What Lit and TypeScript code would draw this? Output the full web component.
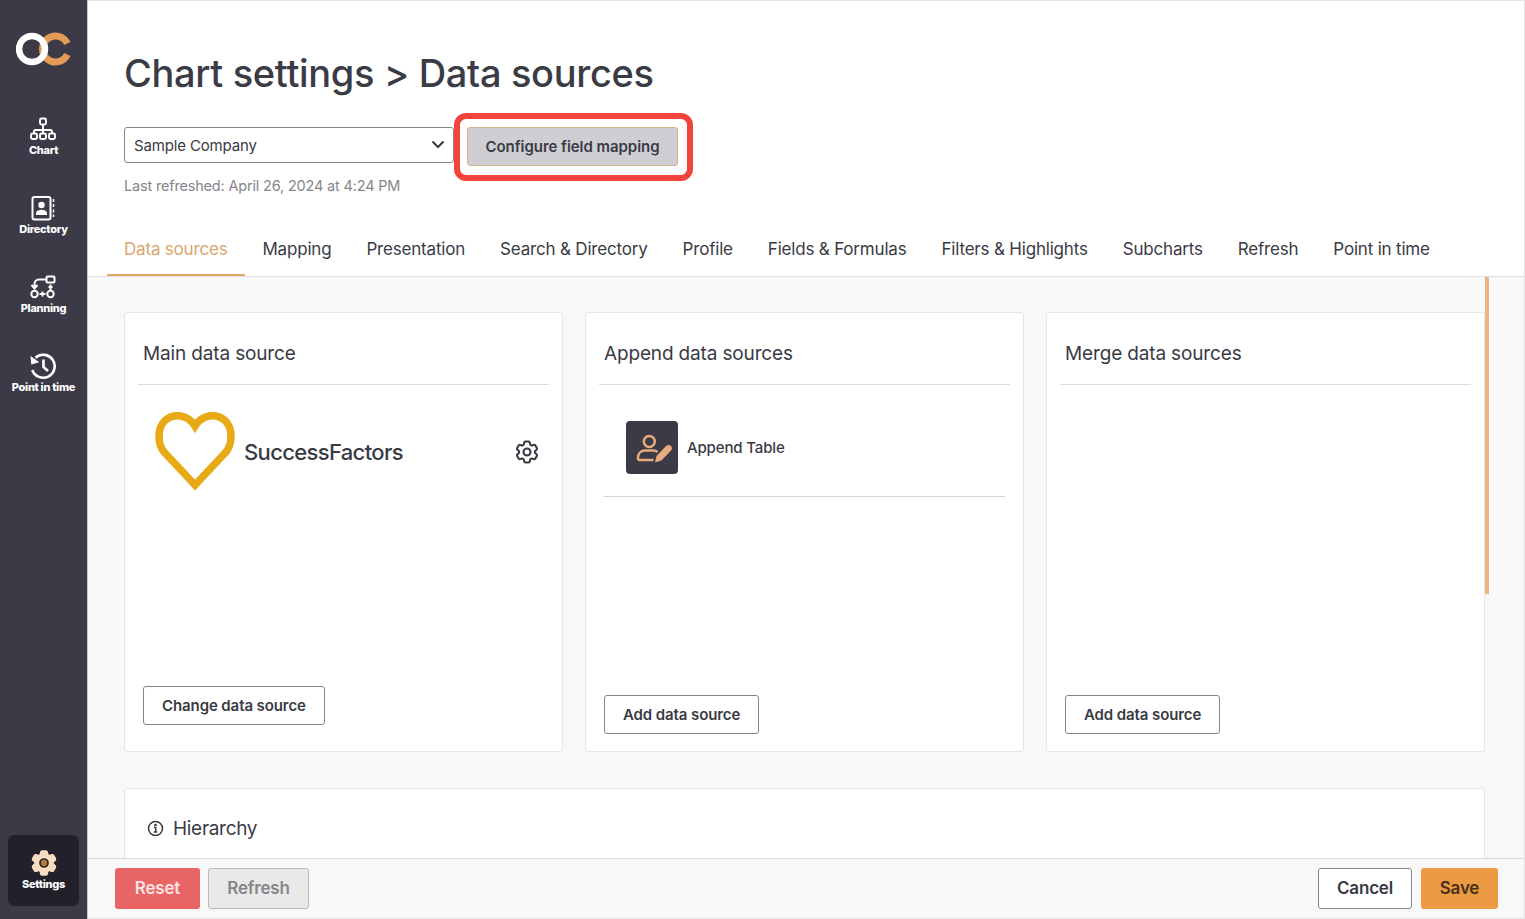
import { LitElement, html, css, svg } from 'lit';
import { customElement } from 'lit/decorators.js';

const navItems = [
  {
    label: 'Chart',
    icon: svg`<g fill="none" stroke="currentColor" stroke-width="1.900" stroke-linejoin="round">
      <rect x="11" y="2.500" width="6" height="6" rx="1.500"/>
      <rect x="2" y="17.500" width="6" height="5.500" rx="1.500"/>
      <rect x="11" y="17.500" width="6" height="5.500" rx="1.500"/>
      <rect x="20" y="17.500" width="6" height="5.500" rx="1.500"/>
      <path d="M14 8.500v9M5 17.500V15.500A1.500 1.500 0 0 1 6.500 14h15a1.500 1.500 0 0 1 1.500 1.500v2"/>
    </g>`,
  },
  {
    label: 'Directory',
    icon: svg`<g fill="none" stroke="currentColor" stroke-width="2">
      <rect x="3.500" y="2" width="18" height="22.500" rx="2"/>
      <path d="M24.500 4v3M24.500 9v3M24.500 14.500v3M24.500 19.500v2.500" stroke-width="1.500"/>
      <circle cx="12.500" cy="10" r="3.200" fill="currentColor" stroke="none"/>
      <path d="M7 20v-1.500c0-2.500 2.200-3.700 5.500-3.700s5.500 1.200 5.500 3.700V20z" fill="currentColor" stroke="none"/>
    </g>`,
  },
  {
    label: 'Planning',
    icon: svg`<g fill="none" stroke="currentColor" stroke-width="2">
      <rect x="17.500" y="2.500" width="8" height="6" rx="1"/>
      <circle cx="5.500" cy="20" r="3.200"/>
      <circle cx="21.500" cy="20" r="3.200"/>
      <path d="M17.500 5.500H10a4.500 4.500 0 0 0-4.500 4.500v4M2.500 11l3 3.500 3-3.500"/>
      <path d="M10.500 20h6M13.500 17.500v5M21.500 16.500v-6M19.500 13h4"/>
    </g>`,
  },
  {
    label: 'Point in time',
    icon: svg`<g fill="none" stroke="currentColor" stroke-width="2.600">
      <path d="M6.500 4.700A11.500 11.500 0 1 1 3.300 17"/>
      <path d="M1.500 3l.8 8.500 8-2.300z" fill="currentColor" stroke="none"/>
      <path d="M14.500 6.500V14l4.500 4"/>
    </g>`,
  },
];

const tabs = [
  'Data sources',
  'Mapping',
  'Presentation',
  'Search & Directory',
  'Profile',
  'Fields & Formulas',
  'Filters & Highlights',
  'Subcharts',
  'Refresh',
  'Point in time',
];

// cog outline, shared by the sidebar and the data source card
const gearPath =
  'M9.594 3.940c.09-.542.56-.94 1.110-.94h2.593c.55 0 1.020.398 1.110.94l.213 1.281c.063.374.313.686.645.870.074.040.147.083.22.127.325.196.72.257 1.075.124l1.217-.456a1.125 1.125 0 0 1 1.370.49l1.296 2.247a1.125 1.125 0 0 1-.26 1.431l-1.003.827c-.293.241-.438.613-.43.992a7.723 7.723 0 0 1 0 .255c-.008.378.137.75.43.991l1.004.827c.424.35.534.955.26 1.430l-1.298 2.247a1.125 1.125 0 0 1-1.369.491l-1.217-.456c-.355-.133-.75-.072-1.076.124a6.470 6.470 0 0 1-.22.128c-.331.183-.581.495-.644.869l-.213 1.281c-.09.543-.56.94-1.110.94h-2.594c-.55 0-1.019-.398-1.110-.94l-.213-1.281c-.062-.374-.312-.686-.644-.87a6.520 6.520 0 0 1-.22-.127c-.325-.196-.72-.257-1.076-.124l-1.217.456a1.125 1.125 0 0 1-1.369-.49l-1.297-2.247a1.125 1.125 0 0 1 .26-1.431l1.004-.827c.292-.24.437-.613.43-.991a6.932 6.932 0 0 1 0-.255c.007-.38-.138-.751-.43-.992l-1.004-.827a1.125 1.125 0 0 1-.26-1.430l1.297-2.247a1.125 1.125 0 0 1 1.370-.491l1.216.456c.356.133.751.072 1.076-.124.072-.044.146-.086.22-.128.332-.183.582-.495.644-.869l.214-1.280z';

@customElement('app-root')
export class AppRoot extends LitElement {
  static styles = css`
    :host {
      display: flex;
      width: 1525px;
      height: 919px;
      overflow: hidden;
      font-family: Inter, 'Liberation Sans', sans-serif;
      color: #3a3a44;
      background: #fff;
    }
    .sidebar {
      width: 87px;
      flex: none;
      background: #3b3a46;
      color: #fff;
      display: flex;
      flex-direction: column;
      align-items: center;
      border-right: 1px solid #c9c9cc;
    }
    .logo {
      margin: 30px 0 0 1px;
      height: 36px;
    }
    .nav {
      margin-top: 50px;
      display: flex;
      flex-direction: column;
      gap: 27px;
      align-items: center;
    }
    .nav-item {
      display: flex;
      flex-direction: column;
      align-items: center;
      height: 52px;
      font-size: 11px;
      font-weight: 800;
      letter-spacing: -0.3px;
      white-space: nowrap;
    }
    .nav-item svg {
      width: 28px;
      height: 28px;
      margin-bottom: -1px;
    }
    .settings {
      margin-top: auto;
      margin-bottom: 13px;
      width: 71px;
      height: 71px;
      background: #22212a;
      border-radius: 6px;
      display: flex;
      flex-direction: column;
      align-items: center;
      font-size: 11px;
      font-weight: 800;
      letter-spacing: -0.3px;
      padding-top: 12px;
      box-sizing: border-box;
    }
    .settings svg {
      width: 32px;
      height: 32px;
      margin-bottom: -2px;
    }
    .main {
      flex: 1;
      min-width: 0;
      display: flex;
      flex-direction: column;
      position: relative;
      border-top: 1px solid #e4e4e6;
      border-right: 1px solid #e4e4e6;
    }
    .header {
      padding: 49px 0 0 36px;
      flex: none;
    }
    h1 {
      margin: 0;
      font-size: 38px;
      line-height: 46px;
      font-weight: 500;
      letter-spacing: -0.33px;
      color: #3a3b45;
    }
    .controls {
      display: flex;
      align-items: flex-start;
      gap: 13px;
      margin-top: 31px;
      height: 40px;
    }
    .select {
      width: 330px;
      height: 36px;
      box-sizing: border-box;
      border: 1px solid #85858c;
      border-radius: 3px;
      padding: 0 9px;
      display: flex;
      align-items: center;
      justify-content: space-between;
      font-size: 15px;
      letter-spacing: -0.15px;
      color: #3a3a44;
    }
    .select svg {
      width: 14px;
      height: 9px;
      margin-right: -1px;
      margin-top: -2px;
    }
    .configure {
      position: relative;
      width: 211px;
      height: 39px;
      box-sizing: border-box;
      border: 1px solid #d3b48f;
      border-radius: 3px;
      background: #cfcfd3;
      font: inherit;
      font-size: 15px;
      font-weight: 600;
      letter-spacing: -0.05px;
      color: #3a3a44;
      padding: 0;
    }
    .highlight {
      position: absolute;
      left: -14px;
      top: -15px;
      width: 239px;
      height: 68px;
      box-sizing: border-box;
      border: 6px solid #f2443c;
      border-radius: 12px;
    }
    .refreshed {
      margin-top: 10px;
      font-size: 14.500px;
      line-height: 18px;
      letter-spacing: -0.18px;
      color: #85858a;
    }
    .tabs {
      display: flex;
      margin: 29px 0 0 -17.500px;
      height: 52px;
    }
    .tab {
      padding: 0 17.500px;
      font-size: 17px;
      line-height: 51px;
      height: 52px;
      box-sizing: border-box;
      letter-spacing: -0.19px;
      white-space: nowrap;
      color: #3a3a44;
    }
    .tab.active {
      color: #dba670;
      border-bottom: 2px solid #e2a66b;
    }
    .content {
      flex: 1;
      min-height: 0;
      overflow: hidden;
      background: #f8f8f8;
      border-top: 1px solid #dedee0;
      padding: 35px 39px 0 36px;
      position: relative;
    }
    .thumb {
      position: absolute;
      right: 35px;
      top: 0;
      width: 4px;
      height: 317px;
      background: #e6b77f;
    }
    .cards {
      display: grid;
      grid-template-columns: repeat(3, 439px);
      gap: 22px;
    }
    .card {
      height: 440px;
      box-sizing: border-box;
      background: #fff;
      border: 1px solid #e6e6e8;
      border-radius: 3px;
      padding: 0 13px;
      display: flex;
      flex-direction: column;
    }
    .card h2 {
      margin: 0;
      padding: 0 5px;
      height: 72px;
      box-sizing: border-box;
      border-bottom: 1px solid #dcdcde;
      font-size: 19px;
      line-height: 82px;
      font-weight: 400;
      letter-spacing: -0.15px;
    }
    .card-body {
      flex: 1;
    }
    .sf {
      display: flex;
      align-items: center;
      padding: 27px 0 0 17px;
      position: relative;
    }
    .sf .heart {
      width: 80px;
      height: 80px;
      flex: none;
    }
    .sf span {
      margin-left: 9px;
      font-size: 22px;
      font-weight: 500;
      letter-spacing: -0.65px;
    }
    .sf .gear {
      position: absolute;
      right: 8px;
      top: 53px;
      width: 28px;
      height: 28px;
    }
    .append {
      margin: 0 5px;
      height: 112px;
      box-sizing: border-box;
      border-bottom: 1px solid #d5d5d8;
      display: flex;
      align-items: center;
      padding: 14px 0 0 22px;
      gap: 9px;
      font-size: 15px;
      font-weight: 500;
      letter-spacing: -0.15px;
    }
    .append .tile {
      width: 52px;
      height: 53px;
      border-radius: 4px;
      background: #3b3a46;
      display: flex;
      align-items: center;
      justify-content: center;
    }
    .card-foot {
      padding: 0 5px 17px;
    }
    .card-foot.main-foot {
      padding-bottom: 26px;
    }
    .btn {
      height: 39px;
      box-sizing: border-box;
      border: 1px solid #85858c;
      border-radius: 3px;
      background: #fff;
      font: inherit;
      font-size: 15px;
      font-weight: 600;
      letter-spacing: -0.1px;
      color: #3a3a44;
      padding: 0 18px;
    }
    .hierarchy {
      margin-top: 36px;
      height: 120px;
      box-sizing: border-box;
      background: #fff;
      border: 1px solid #e6e6e8;
      border-radius: 3px;
      padding: 26px 0 0 22px;
      display: flex;
      align-items: flex-start;
      gap: 9px;
      font-size: 19px;
      line-height: 28px;
      letter-spacing: -0.3px;
    }
    .hierarchy svg {
      width: 17px;
      height: 17px;
      margin-top: 5px;
    }
    .footer {
      flex: none;
      height: 61px;
      box-sizing: border-box;
      background: #f8f8f8;
      border-top: 1px solid #d9d9db;
      border-bottom: 1px solid #e4e4e6;
      padding: 9px 26px 0 27px;
      display: flex;
      gap: 8px;
    }
    .footer button {
      height: 41px;
      box-sizing: border-box;
      border-radius: 3px;
      font: inherit;
      font-size: 17px;
      font-weight: 600;
      letter-spacing: -0.2px;
      padding: 0 0 2px;
    }
    .reset {
      width: 85px;
      border: none;
      background: #e96565;
      color: #fbe4e4;
    }
    .refresh {
      width: 101px;
      border: 1px solid #b8b8bb;
      background: #e9e9ea;
      color: #85858a;
    }
    .footer .cancel {
      width: 94px;
      margin-left: auto;
      border: 1px solid #85858c;
      background: #fff;
      color: #3a3a44;
    }
    .save {
      width: 77px;
      margin-left: 1px;
      border: none;
      background: #ec9b44;
      color: #4a2f16;
    }
  `;

  render() {
    return html`
      <aside class="sidebar">
        <svg class="logo" viewBox="0 0 56 36" width="56">
          <path d="M51.300 13.500A13 13 0 1 0 51.300 24.500" fill="none" stroke="#e39b56" stroke-width="7"/>
          <circle cx="16" cy="19" r="13" fill="none" stroke="#fff" stroke-width="6.500"/>
        </svg>
        <nav class="nav">
          ${navItems.map(
            (item) => html`
              <div class="nav-item">
                <svg viewBox="0 0 28 28">${item.icon}</svg>
                ${item.label}
              </div>
            `
          )}
        </nav>
        <div class="settings">
          <svg viewBox="0 0 24 24">
            <path d=${gearPath} fill="#f6dcc0" stroke="#f6dcc0" stroke-width="1.200"/>
            <circle cx="12" cy="12" r="3" fill="#b5793a" stroke="#2a2420" stroke-width="1.300"/>
          </svg>
          Settings
        </div>
      </aside>

      <div class="main">
        <header class="header">
          <h1>Chart settings &gt; Data sources</h1>
          <div class="controls">
            <div class="select">
              Sample Company
              <svg viewBox="0 0 14 9"><path d="M1.500 1.500 7 7l5.500-5.500" fill="none" stroke="#3a3a44" stroke-width="2"/></svg>
            </div>
            <button class="configure">
              Configure field mapping
              <span class="highlight"></span>
            </button>
          </div>
          <div class="refreshed">Last refreshed: April 26, 2024 at 4:24 PM</div>
          <div class="tabs">
            ${tabs.map(
              (t, i) => html`<div class="tab ${i === 0 ? 'active' : ''}">${t}</div>`
            )}
          </div>
        </header>

        <section class="content">
          <div class="thumb"></div>
          <div class="cards">
            <div class="card">
              <h2>Main data source</h2>
              <div class="card-body">
                <div class="sf">
                  <svg class="heart" viewBox="0 0 80 80">
                    <path d="M40 73 10 41C2 33 2 16 10 8.500c9-8 23-6 30 5.500 7-11.500 21-13.500 30-5.500 8 7.500 8 24.500 0 32.500z" fill="none" stroke="#e8a917" stroke-width="7.500"/>
                  </svg>
                  <span>SuccessFactors</span>
                  <svg class="gear" viewBox="0 0 24 24"><path d=${gearPath} fill="none" stroke="#3a3a44" stroke-width="1.800"/><circle cx="12" cy="12" r="3" fill="none" stroke="#3a3a44" stroke-width="1.800"/></svg>
                </div>
              </div>
              <div class="card-foot main-foot"><button class="btn">Change data source</button></div>
            </div>
            <div class="card">
              <h2>Append data sources</h2>
              <div class="card-body">
                <div class="append">
                  <div class="tile">
                    <svg width="36" height="32" viewBox="0 0 36 32" overflow="visible" fill="none" stroke="#e8ab7c" stroke-width="2.500">
                      <circle cx="15.300" cy="9.500" r="5.500"/>
                      <path d="M4 28v-2c0-4.500 3-7.500 7-7.500h8c2 0 3.500.5 4.500 1.500M4 28h15.500"/>
                      <path d="M21 30.500l1.500-6.500L32 14c1.500-1.500 3.800-1.500 5 0s1.200 3.200 0 4.500L27.500 28.500z" fill="#e8ab7c" stroke="none"/>
                    </svg>
                  </div>
                  Append Table
                </div>
              </div>
              <div class="card-foot"><button class="btn">Add data source</button></div>
            </div>
            <div class="card">
              <h2>Merge data sources</h2>
              <div class="card-body"></div>
              <div class="card-foot"><button class="btn">Add data source</button></div>
            </div>
          </div>
          <div class="hierarchy">
            <svg viewBox="0 0 17 17" fill="none" stroke="#3a3a44" stroke-width="1.500">
              <circle cx="8.500" cy="8.500" r="7"/>
              <path d="M7 7.500h1.700v4.500M6.800 12h3.500"/>
              <circle cx="8.500" cy="5" r=".6" fill="#3a3a44"/>
            </svg>
            Hierarchy
          </div>
        </section>

        <footer class="footer">
          <button class="reset">Reset</button>
          <button class="refresh">Refresh</button>
          <button class="cancel">Cancel</button>
          <button class="save">Save</button>
        </footer>
      </div>
    `;
  }
}

declare global {
  interface HTMLElementTagNameMap {
    'app-root': AppRoot;
  }
}
